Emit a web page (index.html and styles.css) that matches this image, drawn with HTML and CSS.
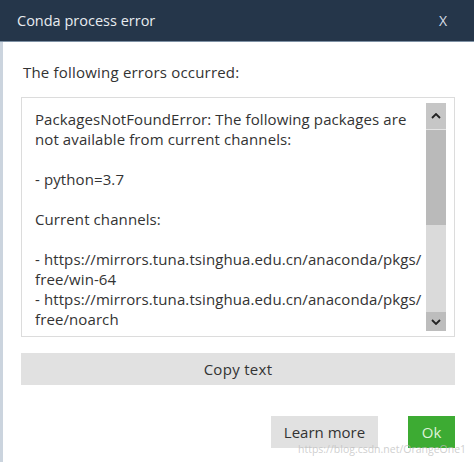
FILE: index.html
```html
<!DOCTYPE html>
<html>
<head>
<meta charset="utf-8">
<link rel="stylesheet" href="styles.css">
</head>
<body>
<div class="window">
  <header class="titlebar">
    <span class="title">Conda process error</span>
    <span class="close">X</span>
  </header>
  <main class="content">
    <p class="intro">The following errors occurred:</p>
    <div class="errorbox">
      <div class="errortext">
        <div class="line">PackagesNotFoundError: The following packages are</div>
        <div class="line">not available from current channels:</div>
        <div class="line">&nbsp;</div>
        <div class="line">- python=3.7</div>
        <div class="line">&nbsp;</div>
        <div class="line">Current channels:</div>
        <div class="line">&nbsp;</div>
        <div class="line">- https://mirrors.tuna.tsinghua.edu.cn/anaconda/pkgs/</div>
        <div class="line">free/win-64</div>
        <div class="line">- https://mirrors.tuna.tsinghua.edu.cn/anaconda/pkgs/</div>
        <div class="line">free/noarch</div>
      </div>
      <div class="scrollbar">
        <div class="sb-btn sb-up">
          <svg width="10" height="6" viewBox="0 0 10 6"><path d="M1 5 L5 1 L9 5" fill="none" stroke="#222" stroke-width="1.8"/></svg>
        </div>
        <div class="sb-thumb"></div>
        <div class="sb-track"></div>
        <div class="sb-btn sb-down">
          <svg width="10" height="6" viewBox="0 0 10 6"><path d="M1 1 L5 5 L9 1" fill="none" stroke="#222" stroke-width="1.8"/></svg>
        </div>
      </div>
    </div>
    <button class="copy">Copy text</button>
    <div class="actions">
      <button class="btn learn">Learn more</button>
      <button class="btn ok">Ok</button>
    </div>
  </main>
  <div class="watermark">https://blog.csdn.net/OrangeOne1</div>
</div>
</body>
</html>
```
FILE: styles.css
```css
html, body {
  margin: 0;
  padding: 0;
  background: #ffffff;
}
body {
  font-family: "Open Sans", "Noto Sans", sans-serif;
  color: #333;
}
.window {
  position: relative;
  width: 474px;
  height: 462px;
  overflow: hidden;
  display: flex;
  flex-direction: column;
}
.titlebar {
  height: 41px;
  background: #25364a;
  border-bottom: 1px solid #7e91a4;
  display: flex;
  align-items: center;
  justify-content: space-between;
  padding: 0 27px 0 17px;
  box-sizing: content-box;
  color: #e8ecf0;
  font-size: 14.5px;
}
.close {
  font-size: 14px;
  color: #d8dee6;
}
.content {
  flex: 1;
  border-left: 3px solid #cbd4de;
  padding: 20px 19px 0 18px;
  display: flex;
  flex-direction: column;
}
.intro {
  margin: 0 0 15px 2px;
  font-size: 15px;
  letter-spacing: 0.2px;
  line-height: 20px;
  color: #333;
}
.errorbox {
  border: 1px solid #dcdcdc;
  display: flex;
  padding: 5px 8px 5px 13px;
  box-sizing: content-box;
  height: 228px;
}
.errortext {
  flex: 1;
  padding-top: 6px;
  font-size: 15px;
  letter-spacing: 0.1px;
  line-height: 20px;
  color: #333;
  overflow: hidden;
}
.line {
  white-space: nowrap;
}
.scrollbar {
  width: 20px;
  display: flex;
  flex-direction: column;
}
.sb-btn {
  display: flex;
  align-items: center;
  justify-content: center;
}
.sb-up {
  height: 26px;
  background: #c6c6c6;
  border-bottom: 1px solid #e4e4e4;
}
.sb-thumb {
  height: 95px;
  background: #bababa;
}
.sb-track {
  flex: 1;
  background: #dadada;
}
.sb-down {
  height: 19px;
  background: #bdbdbd;
}
.copy {
  margin-top: 16px;
  height: 32px;
  border: none;
  background: #e1e1e1;
  font-family: inherit;
  font-size: 15px;
  letter-spacing: 0.3px;
  color: #333;
}
.actions {
  margin-top: 31px;
  display: flex;
  justify-content: flex-end;
  gap: 30px;
}
.btn {
  height: 32px;
  border: none;
  font-family: inherit;
  font-size: 15px;
  padding: 0;
}
.learn {
  width: 107px;
  background: #e1e1e1;
  color: #333;
}
.ok {
  width: 47px;
  background: #3dab33;
  color: #dff3da;
}
.watermark {
  position: absolute;
  left: 298px;
  top: 442px;
  font-size: 10.5px;
  color: rgba(190, 190, 190, 0.75);
  white-space: nowrap;
}
```
